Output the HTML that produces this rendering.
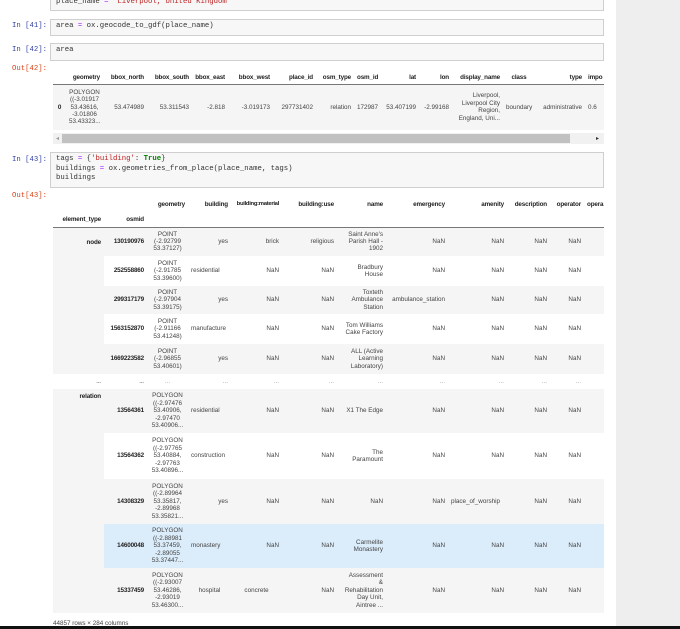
<!DOCTYPE html>
<html><head><meta charset="utf-8"><style>
*{margin:0;padding:0;box-sizing:border-box}
body{width:680px;height:629px;overflow:hidden;background:#eee;position:relative;font-family:"Liberation Sans",sans-serif;color:#444}
#page{position:absolute;left:0;top:0;width:616px;height:629px;background:#fff}
.box{position:absolute;left:50px;width:554px;background:#f7f7f7;border:1px solid #cfcfcf;font-family:"Liberation Mono",monospace;font-size:7.3px;line-height:9.5px;color:#333;padding:2px 5px;white-space:pre}
.lbl{position:absolute;left:12px;font-family:"Liberation Mono",monospace;font-size:7.3px;color:#303f9f}
.out{color:#d84315}
.s{color:#ba2121}.o{color:#aa22ff}.k{color:#008000;font-weight:bold}
table{position:absolute;border-collapse:collapse;table-layout:fixed;font-size:6.3px;line-height:7.4px}
td,th{text-align:right;padding:0 3px;overflow:hidden;white-space:nowrap;vertical-align:middle}
th{font-weight:bold;color:#222;letter-spacing:-0.15px;overflow:visible}
.c{text-align:center}
.g{background:#f5f5f5}.b{background:#dbecfa}
#black{position:absolute;left:0;top:626px;width:680px;height:3px;background:#111}
</style></head><body>
<div id="page">
<div class="box" style="top:-5px;height:16px">place_name <span class="o">=</span> <span class="s">"Liverpool, United Kingdom"</span></div>
<div class="lbl" style="top:22px">In [41]:</div>
<div class="box" style="top:19px;height:17px">area <span class="o">=</span> ox.geocode_to_gdf(place_name)</div>
<div class="lbl" style="top:46px">In [42]:</div>
<div class="box" style="top:43px;height:18px">area</div>
<div class="lbl out" style="top:65px">Out[42]:</div>

<div style="position:absolute;left:53px;top:72px;width:551px;height:59px;overflow:hidden">
<table style="left:0;top:0;width:560px">
<colgroup><col style="width:13px"><col style="width:37px"><col style="width:44px"><col style="width:45px"><col style="width:36px"><col style="width:45px"><col style="width:43px"><col style="width:38px"><col style="width:27px"><col style="width:38px"><col style="width:33px"><col style="width:51px"><col style="width:32px"><col style="width:50px"><col style="width:28px"></colgroup>
<tr style="height:12px;border-bottom:1px solid #777"><th></th><th>geometry</th><th>bbox_north</th><th>bbox_south</th><th>bbox_east</th><th>bbox_west</th><th>place_id</th><th>osm_type</th><th>osm_id</th><th>lat</th><th>lon</th><th>display_name</th><th class="c">class</th><th>type</th><th style="text-align:left">impo</th></tr>
<tr class="g" style="height:46px"><th class="c">0</th><td class="c">POLYGON<br>((-3.01917<br>53.43616,<br>-3.01806<br>53.43323...</td><td>53.474989</td><td>53.311543</td><td>-2.818</td><td>-3.019173</td><td>297731402</td><td>relation</td><td>172987</td><td>53.407199</td><td>-2.99168</td><td>Liverpool,<br>Liverpool City<br>Region,<br>England, Uni...</td><td class="c">boundary</td><td>administrative</td><td style="text-align:left">0.6</td></tr>
</table>
</div>
<div style="position:absolute;left:53px;top:133px;width:551px;height:11px;background:#f1f1f1"></div>
<div style="position:absolute;left:62px;top:134px;width:508px;height:9px;background:#c1c1c1"></div>
<div style="position:absolute;left:56px;top:135px;font-size:6px;color:#999">◂</div>
<div style="position:absolute;left:596px;top:135px;font-size:6px;color:#333">▸</div>

<div class="lbl" style="top:156px">In [43]:</div>
<div class="box" style="top:152px;height:36px">tags <span class="o">=</span> {<span class="s">'building'</span>: <span class="k">True</span>}
buildings <span class="o">=</span> ox.geometries_from_place(place_name, tags)
buildings</div>
<div class="lbl out" style="top:192px">Out[43]:</div>

<div style="position:absolute;left:53px;top:198px;width:551px;height:417px;overflow:hidden">
<table style="left:0;top:0;width:560px">
<colgroup><col style="width:51px"><col style="width:43px"><col style="width:41px"><col style="width:43px"><col style="width:51px"><col style="width:55px"><col style="width:49px"><col style="width:62px"><col style="width:59px"><col style="width:43px"><col style="width:34px"><col style="width:29px"></colgroup>
<tr style="height:14px"><th></th><th></th><th>geometry</th><th>building</th><th style="font-size:5.9px;letter-spacing:-0.3px">building:material</th><th>building:use</th><th>name</th><th>emergency</th><th>amenity</th><th>description</th><th>operator</th><th style="text-align:left">opera</th></tr>
<tr style="height:15px;border-bottom:1px solid #777"><th>element_type</th><th>osmid</th><th></th><th></th><th></th><th></th><th></th><th></th><th></th><th></th><th></th><th></th></tr>
<tr class="g" style="height:29px"><th rowspan="5" class="g" style="vertical-align:top;padding-top:11px">node</th><th>130190976</th><td class="c">POINT<br>(-2.92799<br>53.37127)</td><td>yes</td><td>brick</td><td>religious</td><td>Saint Anne's<br>Parish Hall -<br>1902</td><td>NaN</td><td>NaN</td><td>NaN</td><td>NaN</td><td></td></tr>
<tr style="height:30px"><th>252558860</th><td class="c">POINT<br>(-2.91785<br>53.39600)</td><td style="text-align:left">residential</td><td>NaN</td><td>NaN</td><td>Bradbury<br>House</td><td>NaN</td><td>NaN</td><td>NaN</td><td>NaN</td><td></td></tr>
<tr class="g" style="height:28px"><th>299317179</th><td class="c">POINT<br>(-2.97904<br>53.39175)</td><td>yes</td><td>NaN</td><td>NaN</td><td>Toxteth<br>Ambulance<br>Station</td><td>ambulance_station</td><td>NaN</td><td>NaN</td><td>NaN</td><td></td></tr>
<tr style="height:30px"><th>1563152870</th><td class="c">POINT<br>(-2.91166<br>53.41248)</td><td style="text-align:left">manufacture</td><td>NaN</td><td>NaN</td><td>Tom Williams<br>Cake Factory</td><td>NaN</td><td>NaN</td><td>NaN</td><td>NaN</td><td></td></tr>
<tr class="g" style="height:30px"><th>1669223582</th><td class="c">POINT<br>(-2.96855<br>53.40601)</td><td>yes</td><td>NaN</td><td>NaN</td><td>ALL (Active<br>Learning<br>Laboratory)</td><td>NaN</td><td>NaN</td><td>NaN</td><td>NaN</td><td></td></tr>
<tr style="height:15px;color:#999"><th style="color:#999">...</th><th style="color:#999">...</th><td class="c">...</td><td>...</td><td>...</td><td>...</td><td>...</td><td>...</td><td>...</td><td>...</td><td>...</td><td></td></tr>
<tr class="g" style="height:44px"><th rowspan="5" class="g" style="vertical-align:top;padding-top:4px">relation</th><th>13564361</th><td class="c">POLYGON<br>((-2.97476<br>53.40906,<br>-2.97470<br>53.40906...</td><td style="text-align:left">residential</td><td>NaN</td><td>NaN</td><td>X1 The Edge</td><td>NaN</td><td>NaN</td><td>NaN</td><td>NaN</td><td></td></tr>
<tr style="height:46px"><th>13564362</th><td class="c">POLYGON<br>((-2.97765<br>53.40884,<br>-2.97763<br>53.40896...</td><td style="text-align:left">construction</td><td>NaN</td><td>NaN</td><td>The<br>Paramount</td><td>NaN</td><td>NaN</td><td>NaN</td><td>NaN</td><td></td></tr>
<tr class="g" style="height:45px"><th>14308329</th><td class="c">POLYGON<br>((-2.89964<br>53.35817,<br>-2.89968<br>53.35821...</td><td>yes</td><td>NaN</td><td>NaN</td><td>NaN</td><td>NaN</td><td style="text-align:left">place_of_worship</td><td>NaN</td><td>NaN</td><td></td></tr>
<tr class="b" style="height:44px"><th>14600048</th><td class="c">POLYGON<br>((-2.88981<br>53.37459,<br>-2.89055<br>53.37447...</td><td style="text-align:left">monastery</td><td>NaN</td><td>NaN</td><td>Carmelite<br>Monastery</td><td>NaN</td><td>NaN</td><td>NaN</td><td>NaN</td><td></td></tr>
<tr class="g" style="height:45px"><th>15337459</th><td class="c">POLYGON<br>((-2.93007<br>53.46286,<br>-2.93019<br>53.46300...</td><td class="c">hospital</td><td class="c">concrete</td><td>NaN</td><td>Assessment<br>&amp;<br>Rehabilitation<br>Day Unit,<br>Aintree ...</td><td>NaN</td><td>NaN</td><td>NaN</td><td>NaN</td><td></td></tr>
</table>
</div>
<div style="position:absolute;left:53px;top:620px;font-size:6.3px;color:#444">44857 rows × 284 columns</div>
</div>
<div id="black"></div>
</body></html>
